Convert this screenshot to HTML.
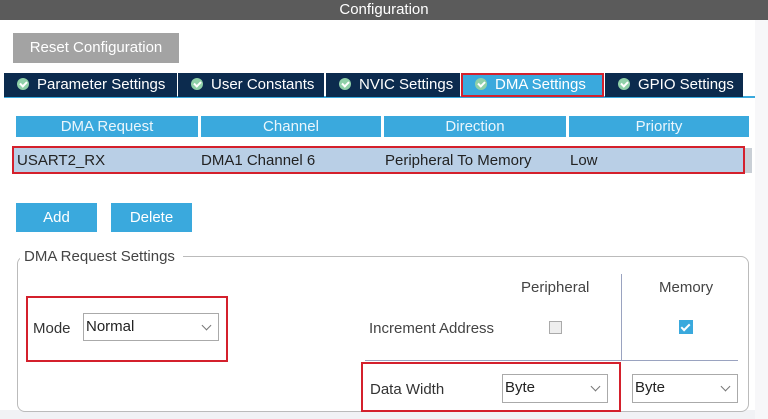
<!DOCTYPE html>
<html><head><style>
*{margin:0;padding:0;box-sizing:border-box}
body{width:768px;height:419px;background:#fff;font-family:"Liberation Sans",sans-serif;position:relative;overflow:hidden;color:#333}
div{position:absolute}
.t{font-size:15px;white-space:nowrap}
.tab{top:73px;height:24px;background:#0c2b4e;color:#fff;font-size:15px;line-height:24px;padding-left:12px;white-space:nowrap}
.ck{display:inline-block;width:12px;height:12px;border-radius:50%;background:#8fd0a8;margin-right:8px;vertical-align:-1px;position:relative}
.ck:after{content:"";position:absolute;left:3px;top:2.5px;width:5px;height:3px;border-left:2px solid #fff;border-bottom:2px solid #fff;transform:rotate(-45deg)}
.h{top:116px;height:21px;background:#3aa9dd;color:#eaf6fc;font-size:15px;text-align:center;line-height:21px}
.c{top:148px;height:25px;line-height:25px;font-size:15px;color:#222}
.btn{background:#3aa9dd;color:#fff;font-size:15px;text-align:center;line-height:29px;top:203px;height:29px}
.sel{border:1px solid #aaa;background:#fff;font-size:15px;line-height:26px;padding-left:2px;color:#222}
.sel:after{content:"";position:absolute;right:8px;top:8px;width:6px;height:6px;border-right:1px solid #777;border-bottom:1px solid #777;transform:rotate(45deg)}
.red{border:2px solid #d4202c}
</style></head><body>
<div style="left:0;top:0;width:768px;height:20px;background:#5b5b5b;color:#fff;font-size:15px;text-align:center;line-height:20px">Configuration</div>
<div style="left:13px;top:33px;width:166px;height:30px;background:#a3a3a3;color:#fff;font-size:15px;text-align:center;line-height:30px">Reset Configuration</div>
<div style="left:4px;top:96px;width:762px;height:2px;background:#3aa9dd"></div>
<div class="tab" style="left:4px;width:173px;padding-left:13px"><span class="ck"></span>Parameter Settings</div>
<div class="tab" style="left:178px;width:146px;padding-left:13px"><span class="ck"></span>User Constants</div>
<div class="tab" style="left:326px;width:134px;padding-left:13px"><span class="ck"></span>NVIC Settings</div>
<div class="tab red" style="left:461px;width:143px;background:#3aa9dd;padding-left:12px;line-height:20px"><span class="ck"></span>DMA Settings</div>
<div class="tab" style="left:605px;width:138px;padding-left:13px"><span class="ck"></span>GPIO Settings</div>
<div class="h" style="left:16px;width:182px">DMA Request</div>
<div class="h" style="left:201px;width:180px">Channel</div>
<div class="h" style="left:384px;width:182px">Direction</div>
<div class="h" style="left:569px;width:180px">Priority</div>
<div style="left:13px;top:148px;width:739px;height:25px;background:#b9cfe6"></div>
<div style="left:745px;top:148px;width:7px;height:25px;background:#c9cfd6"></div>
<div class="red" style="left:12px;top:146px;width:733px;height:28px"></div>
<div class="c" style="left:17px">USART2_RX</div>
<div class="c" style="left:201px">DMA1 Channel 6</div>
<div class="c" style="left:385px">Peripheral To Memory</div>
<div class="c" style="left:570px">Low</div>
<div class="btn" style="left:16px;width:81px">Add</div>
<div class="btn" style="left:111px;width:81px">Delete</div>
<div style="left:0;top:410px;width:768px;height:9px;background:#f1f2f5"></div>
<div style="left:755px;top:20px;width:13px;height:399px;background:#f7f7f9"></div>
<div style="left:17px;top:256px;width:732px;height:156px;border:1px solid #bbb;border-radius:8px;background:#fff"></div>
<div class="t" style="left:20px;top:248px;background:#fff;padding:0 8px 0 4px;color:#444">DMA Request Settings</div>
<div class="t" style="left:521px;top:279px;color:#444">Peripheral</div>
<div class="t" style="left:659px;top:279px;color:#444">Memory</div>
<div style="left:621px;top:274px;width:1px;height:87px;background:#9aa3c0"></div>
<div style="left:365px;top:360px;width:373px;height:1px;background:#9aa3c0"></div>
<div class="t" style="left:369px;top:320px;color:#444">Increment Address</div>
<div style="left:549px;top:321px;width:13px;height:13px;border:1px solid #aaa;background:#eee"></div>
<div style="left:679px;top:320px;width:14px;height:14px;background:#3aa9dd"></div>
<div style="left:683px;top:322px;width:5px;height:9px;border-right:2px solid #fff;border-bottom:2px solid #fff;transform:rotate(45deg)"></div>
<div class="red" style="left:26px;top:296px;width:202px;height:66px"></div>
<div class="t" style="left:33px;top:320px">Mode</div>
<div class="sel" style="left:83px;top:313px;width:136px;height:28px">Normal</div>
<div class="red" style="left:361px;top:362px;width:260px;height:50px"></div>
<div class="t" style="left:370px;top:381px">Data Width</div>
<div class="sel" style="left:502px;top:374px;width:106px;height:29px">Byte</div>
<div class="sel" style="left:632px;top:374px;width:106px;height:29px">Byte</div>
</body></html>
